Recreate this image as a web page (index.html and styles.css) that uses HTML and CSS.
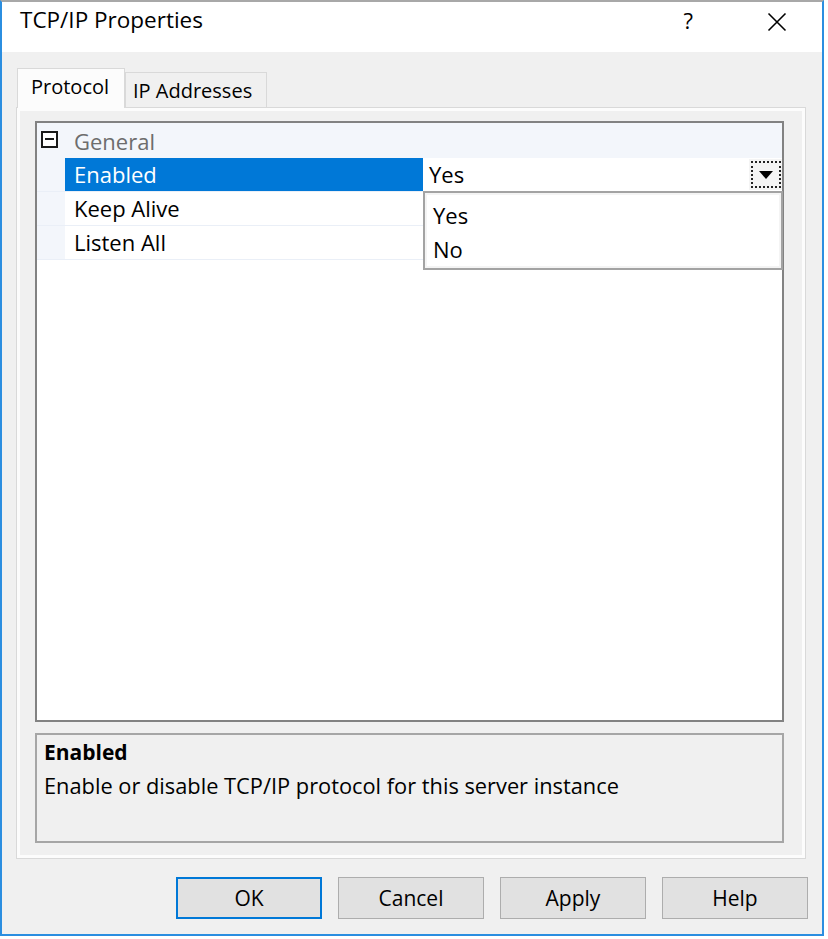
FILE: index.html
```html
<!DOCTYPE html>
<html>
<head>
<meta charset="utf-8">
<title>TCP/IP Properties</title>
<link rel="stylesheet" href="styles.css">
</head>
<body>
<div class="window">
  <div class="titlebar">
    <div class="title">TCP/IP Properties</div>
    <div class="title-actions">
      <span class="help-q">?</span>
      <span class="close-x">
        <svg width="20" height="20" viewBox="0 0 20 20"><path d="M1.5 1.5 L18.5 18.5 M18.5 1.5 L1.5 18.5" stroke="#000" stroke-width="1.6" fill="none"/></svg>
      </span>
    </div>
  </div>
  <div class="body">
    <div class="tabs">
      <div class="tab active">Protocol</div>
      <div class="tab">IP Addresses</div>
    </div>
    <div class="panel">
      <div class="panel-inner">
        <div class="grid">
          <div class="cat-row">
            <span class="minus"><span class="minus-bar"></span></span>
            <span class="cat-label">General</span>
          </div>
          <div class="prop-row selected">
            <div class="name">Enabled</div>
            <div class="value">
              <span class="value-text">Yes</span>
              <span class="dd-btn"><span class="dd-focus"><span class="dd-arrow"></span></span></span>
            </div>
          </div>
          <div class="prop-row">
            <div class="name">Keep Alive</div>
            <div class="value"></div>
          </div>
          <div class="prop-row">
            <div class="name">Listen All</div>
            <div class="value"></div>
          </div>
          <div class="popup">
            <div class="popup-inner">
              <div class="popup-item">Yes</div>
              <div class="popup-item">No</div>
            </div>
          </div>
        </div>
        <div class="desc">
          <div class="desc-title">Enabled</div>
          <div class="desc-text">Enable or disable TCP/IP protocol for this server instance</div>
        </div>
      </div>
    </div>
    <div class="buttons">
      <button class="btn default">OK</button>
      <button class="btn">Cancel</button>
      <button class="btn">Apply</button>
      <button class="btn">Help</button>
    </div>
  </div>
</div>
</body>
</html>
```

FILE: styles.css
```css
* { box-sizing: border-box; }
html, body { margin: 0; padding: 0; background: #ffffff; }
body {
  font-family: "Open Sans", "Noto Sans", "Liberation Sans", sans-serif;
  font-size: 22px;
  color: #000;
}
.window {
  width: 824px;
  height: 936px;
  border: 2px solid #2b8ee0;
  border-top: 2px solid #a8a8a8;
  display: flex;
  flex-direction: column;
}
.titlebar {
  height: 50px;
  background: #fff;
  display: flex;
  justify-content: space-between;
  padding: 3px 0 0 18px;
}
.title {
  font-size: 22.5px;
  line-height: 30px;
}
.title-actions {
  display: flex;
  align-items: flex-start;
}
.help-q {
  font-size: 22px;
  line-height: 30px;
  margin-right: 74px;
}
.close-x {
  display: block;
  margin-top: 7px;
  margin-right: 35px;
  width: 20px;
  height: 20px;
}
.close-x svg { display: block; }
.body {
  flex: 1;
  background: #f0f0f0;
  padding: 16px 14px 15px 14px;
  display: flex;
  flex-direction: column;
}
.tabs {
  display: flex;
  align-items: flex-end;
  height: 39px;
  padding-left: 1px;
  position: relative;
  z-index: 1;
}
.tab {
  border: 1px solid #d9d9d9;
  border-bottom: none;
  background: #f0f0f0;
  height: 35px;
  line-height: 35px;
  padding: 0 0 0 7px;
  width: 142px;
  font-size: 20px;
  white-space: nowrap;
}
.tab.active {
  background: #fcfcfc;
  height: 40px;
  margin-bottom: -1px;
  width: 108px;
  padding: 0 0 0 13px;
  line-height: 36px;
}
.panel {
  width: 790px;
  height: 752px;
  border: 1px solid #d9d9d9;
  background: #fcfcfc;
  padding: 3px;
}
.panel-inner {
  height: 100%;
  background: #f0f0f0;
  padding: 10px 18px 12px 15px;
  display: flex;
  flex-direction: column;
  gap: 11px;
}
.grid {
  position: relative;
  height: 601px;
  border: 2px solid #828282;
  background: #fff;
}
.cat-row {
  height: 35px;
  background: #f3f6fb;
  display: flex;
  align-items: center;
  padding-left: 4px;
}
.minus {
  width: 17px;
  height: 17px;
  border: 2px solid #1a1a1a;
  background: #fff;
  display: flex;
  align-items: center;
  justify-content: center;
  margin-top: -3px;
}
.minus-bar {
  width: 9px;
  height: 2px;
  background: #1a1a1a;
}
.cat-label {
  margin-left: 16px;
  color: #6d6d6d;
  line-height: 32px;
}
.prop-row {
  display: flex;
  height: 34px;
  padding-left: 28px;
  background: #f3f6fb;
  border-bottom: 1px solid #eaeff7;
}
.name {
  width: 358px;
  background: #fff;
  padding-left: 9px;
  line-height: 33px;
}
.prop-row.selected .name {
  background: #0078d7;
  color: #fff;
}
.value {
  flex: 1;
  background: #fff;
  display: flex;
  justify-content: space-between;
  align-items: flex-start;
  padding-left: 6px;
  line-height: 33px;
}
.dd-btn {
  width: 33px;
  height: 31px;
  margin-top: 1px;
  background: #f4f4f4;
  padding: 2px 1px 2px 2px;
}
.dd-focus {
  display: flex;
  width: 100%;
  height: 100%;
  border: 2px dotted #222;
  align-items: center;
  justify-content: center;
}
.dd-arrow {
  width: 0;
  height: 0;
  border-left: 7px solid transparent;
  border-right: 7px solid transparent;
  border-top: 8px solid #000;
  margin-top: 1px;
}
.popup {
  position: absolute;
  left: 386px;
  top: 68px;
  width: 360px;
  height: 79px;
  border: 2px solid #a3a3a3;
  background: #f4f4f4;
  padding: 2px;
  z-index: 2;
}
.popup-inner {
  height: 100%;
  background: #fff;
  padding: 3px 0 0 6px;
}
.popup-item {
  height: 34px;
  line-height: 34px;
}
.desc {
  height: 110px;
  border: 2px solid #a6a6a6;
  background: #f0f0f0;
  padding: 0 7px;
}
.desc-title {
  font-weight: bold;
  font-size: 21px;
  line-height: 34px;
}
.desc-text {
  font-size: 21.8px;
  line-height: 34px;
}
.buttons {
  display: flex;
  justify-content: flex-end;
  gap: 16px;
  margin-top: 18px;
}
.btn {
  width: 146px;
  height: 42px;
  border: 1px solid #adadad;
  background: #e1e1e1;
  font-family: inherit;
  font-size: 21px;
  color: #000;
  padding: 0;
  margin: 0;
}
.btn.default {
  border: 2px solid #0078d7;
}
```
